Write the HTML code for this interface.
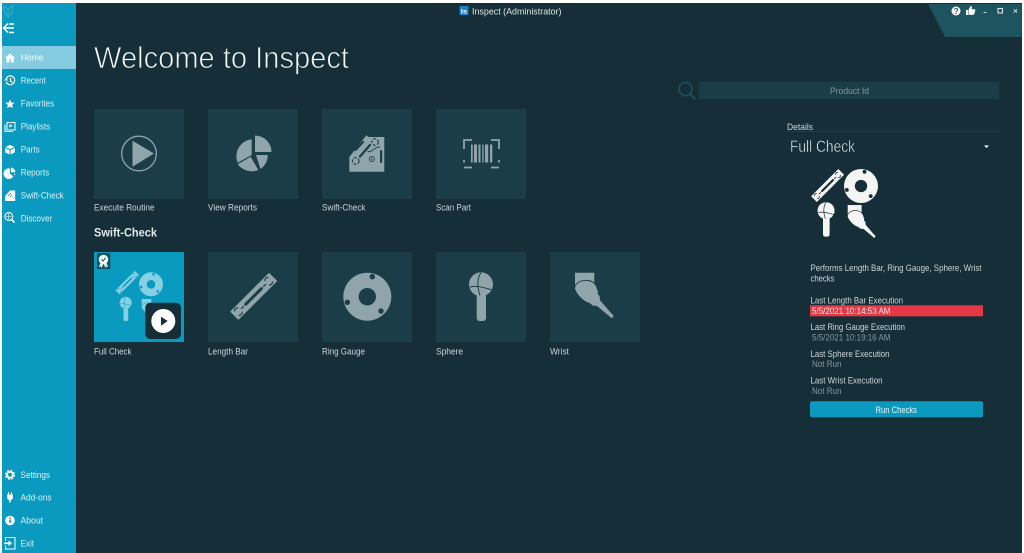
<!DOCTYPE html>
<html><head><meta charset="utf-8"><style>
html,body{margin:0;padding:0;background:#fff;width:1024px;height:553px;overflow:hidden}
svg{display:block}
text{font-family:"Liberation Sans",sans-serif;font-size:9.4px}
.n{fill:#d9f0f6}
.l{fill:#cdd5d8}
.v{fill:#84989e}
.thin{stroke:#152e37;stroke-width:.85}
.tile{fill:#1b3d47}
.g{fill:#8fa5ab}
.h{fill:var(--h)}
.w{fill:#fff}
</style></head><body>
<svg width="1024" height="553" viewBox="0 0 1024 553" xmlns="http://www.w3.org/2000/svg">
<defs>
<g id="bar"><g transform="rotate(-45 253.700 296.300)"><rect x="226.200" y="290.500" width="55" height="11.600" fill="currentColor"/><rect x="241" y="294.800" width="25" height="3" rx="1.500" class="h"/><path d="M236 296.300h4M267 296.300h4" style="stroke:var(--h)" stroke-width="1.200"/><path d="M229.500 293.500a3 3 0 0 1 5 0M229.500 299a3 3 0 0 0 5 0M272.500 293.500a3 3 0 0 1 5 0M272.500 299a3 3 0 0 0 5 0" fill="none" style="stroke:var(--h)" stroke-width="1.200"/></g></g>
<g id="ring"><path fill="currentColor" fill-rule="evenodd" d="M343.300 296.700a24 24 0 1 0 48 0a24 24 0 1 0-48 0zM358.600 296.700a8.700 8.700 0 1 1 17.400 0a8.700 8.700 0 1 1-17.400 0z"/><circle cx="372.300" cy="276.700" r="2.700" class="h"/><circle cx="347.300" cy="302.300" r="2.700" class="h"/><circle cx="381" cy="311" r="2.700" class="h"/></g>
<g id="sph"><rect x="476.700" y="292" width="9.300" height="29" rx="3" fill="currentColor"/><circle cx="481" cy="284.300" r="12" fill="currentColor"/><path d="M470 287c7-2 15 1 22.500 3M481 272.500c-4 6-4 14-1 23" fill="none" style="stroke:var(--h)" stroke-width="1"/></g>
<g id="wr"><path fill="currentColor" d="M575 272.700H594.300V286H575z"/><path fill="currentColor" style="stroke:var(--h)" stroke-width=".9" d="M574.500 288c1-6 8-8.500 14-7.500c5 1 8 4 9 9l1 2-.5 2 2 2.500.5 4 11.500 13.500c2 .8 2.300 3 1.200 4.200c-1.200 1.200-3 .8-3.800-.8l-12.500-10.500-4.500-.5-3-2.500c-7-2-13-9-15-15z"/></g>
</defs>

<rect x="2" y="3" width="1020" height="550" fill="#152e37"/>
<rect x="2" y="3" width="74" height="550" fill="#0a9abf"/>
<rect x="2" y="46" width="74" height="23" fill="#85cce0"/>
<polygon points="928,4 945,37 1022,37 1022,4" fill="#1d545f"/>

<g fill="none" stroke="#4fb4cf" stroke-width=".7"><path d="M3 6l5 3 5-4-1 8-4 4-3-4zM8 9v8"/></g>
<g fill="none" stroke="#fff" stroke-width="1.400"><path d="M8 23.500l-4.500 4.500 4.500 4.500M4 28h10M9 24h5M9 32.500h5"/></g>

<text lengthAdjust="spacingAndGlyphs" class="n" x="20.700" y="60.500" textLength="23" style="fill:#f2fafc">Home</text>
<text lengthAdjust="spacingAndGlyphs" class="n" x="20.700" y="83.500" textLength="25">Recent</text>
<text lengthAdjust="spacingAndGlyphs" class="n" x="20.700" y="106.500" textLength="33.500">Favorites</text>
<text lengthAdjust="spacingAndGlyphs" class="n" x="20.700" y="129.500" textLength="29.500">Playlists</text>
<text lengthAdjust="spacingAndGlyphs" class="n" x="20.700" y="152.500" textLength="19">Parts</text>
<text lengthAdjust="spacingAndGlyphs" class="n" x="20.700" y="175.500" textLength="28.500">Reports</text>
<text lengthAdjust="spacingAndGlyphs" class="n" x="20.700" y="198.500" textLength="43">Swift-Check</text>
<text lengthAdjust="spacingAndGlyphs" class="n" x="20.700" y="221.300" textLength="31.500">Discover</text>
<text lengthAdjust="spacingAndGlyphs" class="n" x="20.500" y="477.800" textLength="29.500">Settings</text>
<text lengthAdjust="spacingAndGlyphs" class="n" x="20.500" y="500.600" textLength="31">Add-ons</text>
<text lengthAdjust="spacingAndGlyphs" class="n" x="20.500" y="523.500" textLength="22.500">About</text>
<text lengthAdjust="spacingAndGlyphs" class="n" x="20.500" y="546.500" textLength="13.500">Exit</text>

<g class="w">
<path d="M10 53.500l-5 4.500h1.500v4.500h2.800v-3h1.600v3h2.800v-4.500h1.500z"/>
<path fill="none" stroke="#fff" stroke-width="1.200" d="M6.500 78a4.400 4.400 0 1 1-.3 4M10.500 78v3l2 1.300"/><path d="M4.500 80.500h3.500l-1.700-3z"/>
<path d="M10 99.500l1.300 3 3.300.3-2.500 2.200.8 3.200-2.900-1.700-2.900 1.700.8-3.200-2.500-2.200 3.300-.3z"/>
<path fill="none" stroke="#fff" stroke-width="1" d="M7 122.500h8v7.500H7zM5 124.500v7h8"/><path d="M9.500 124l3 1.800-3 1.800z"/>
<path d="M10 145l4.500 2-4.500 2-4.500-2zM5.200 148l4.300 2v4.500l-4.300-2zM14.800 148l-4.300 2v4.500l4.300-2z"/>
<path d="M10.800 167.500a5 5 0 0 1 4.700 4.700h-4.700zM9.800 168.500v5l3.500 3a5.300 5.300 0 1 1-3.500-8zM14 174l1.300-.8-.5 2.500z"/>
<path d="M5 196l5-5.500h5.200V201H5z"/><path d="M8 196l3-3M10 197l2-2" stroke="#0a9abf" stroke-width=".8"/>
<circle cx="8.800" cy="216.500" r="3.900" fill="none" stroke="#fff" stroke-width="1.100"/><path d="M6 216.500h5.500M8.800 213.500v6" stroke="#fff" stroke-width=".6"/><path d="M11.500 219.500l3 3" stroke="#fff" stroke-width="1.700"/>
<circle cx="10" cy="474.800" r="2.900" fill="none" stroke="#fff" stroke-width="1.800"/><circle cx="10" cy="474.800" r="4.400" fill="none" stroke="#fff" stroke-width="1.300" stroke-dasharray="2 1.500"/>
<path d="M8 492h.9v2.500H8zM11.100 492h.9v2.500h-.9zM7 494.500h6v2.500a3 3 0 0 1-2.300 3v2.500H9.300V500a3 3 0 0 1-2.300-3z"/>
<circle cx="10" cy="520.500" r="4.800"/><rect x="9.200" y="519.500" width="1.600" height="3.400" fill="#0a9abf"/><rect x="9.200" y="517.400" width="1.600" height="1.400" fill="#0a9abf"/>
<path fill="none" stroke="#fff" stroke-width="1" d="M5.500 541v-3.500h9.500v11.500H5.500v-3.500"/><path d="M4 542.500h4.500v-2l3.500 2.800-3.500 2.800v-2H4z"/>
</g>

<rect x="459.500" y="6" width="9" height="9" fill="#1c7fc4"/>
<text lengthAdjust="spacingAndGlyphs" x="460.800" y="13.300" textLength="6.400" style="font-size:6.500px;font-weight:bold" fill="#fff">Is</text>
<text lengthAdjust="spacingAndGlyphs" x="472" y="14.300" textLength="89.500" fill="#dfe6e8">Inspect (Administrator)</text>
<circle cx="956" cy="11" r="4.500" fill="#fff"/>
<text x="953.800" y="13.800" style="font-size:8px;font-weight:bold" fill="#1d545f">?</text>
<path d="M966 10h2v5h-2zM968.500 10l2-4c1 0 1.500.6 1.400 1.500l-.3 1.700h2.900c.7 0 1 .6.800 1.200l-1 3.500c-.2.600-.6 1-1.200 1h-4.600z" fill="#fff"/>
<rect x="983.500" y="12" width="3" height="1" fill="#c9d6da"/>
<rect x="998" y="8.500" width="4.500" height="4.500" fill="none" stroke="#dbe4e6" stroke-width="1.100"/>
<path d="M1013.700 9.300l3.400 3.400M1017.100 9.300l-3.400 3.400" stroke="#c9d6da" stroke-width="1"/>

<text lengthAdjust="spacingAndGlyphs" class="thin" x="94" y="68" textLength="255" style="font-size:31px" fill="#f4f7f8">Welcome to Inspect</text>

<circle cx="685.500" cy="89" r="6.500" fill="none" stroke="#1e4d5c" stroke-width="1.800"/>
<path d="M690.500 94l5 5.500" stroke="#1e4d5c" stroke-width="2"/>
<rect x="699.300" y="81.700" width="300" height="17.300" class="tile"/>
<text lengthAdjust="spacingAndGlyphs" class="v" x="830" y="94" textLength="39">Product Id</text>

<rect class="tile" x="94" y="109" width="90" height="90"/>
<rect class="tile" x="208" y="109" width="90" height="90"/>
<rect class="tile" x="322" y="109" width="90" height="90"/>
<rect class="tile" x="436" y="109" width="90" height="90"/>
<circle cx="139" cy="153.500" r="17.300" fill="none" stroke="#8fa5ab" stroke-width="1.300"/>
<polygon class="g" points="132.500,140.700 154,153.500 132.500,166.700"/>
<g class="g">
<path d="M255 135.500A16.500 16.500 0 0 1 271.500 152H255z"/>
<path d="M256 155h11.800A17 17 0 0 1 260.500 169z"/>
<path d="M250.700 156.700L258.300 170A17.500 17.500 0 0 1 237.700 164.300z"/>
<path d="M251.700 139.300V155L237.700 162.700A17 17 0 0 1 251.700 139.300z"/>
</g>
<g>
<path class="g" d="M349.300 157L365 137l1.500-1.800 2 1.800H384.300V171.700H349.300z"/>
<g fill="none" stroke="#1b3d47">
<path stroke-width="2.200" stroke-linecap="round" d="M355.500 150l7.500-8M360 156.500l10-11.500"/>
<circle cx="375" cy="142" r="3.300" stroke-width="1.100" stroke-dasharray="3 1.500"/>
<circle cx="355.700" cy="161" r="3.300" stroke-width="1.100" stroke-dasharray="3 1.500"/>
<circle cx="371.700" cy="159" r="2.500" stroke-width=".9"/>
<path stroke-width=".9" d="M367.500 151c2.500 2 4-.5 6-1.500s3-3 6.800-2.500"/>
</g>
<rect x="380" y="150" width="2.200" height="13" rx="1.100" fill="#1b3d47"/>
<circle cx="371.700" cy="159" r=".8" fill="#1b3d47"/>
</g>
<g fill="none" stroke="#8fa5ab" stroke-width="1.800">
<path d="M464 149v-9h8M491 140h8v9M464 160v2.500M499 160v2.500M464 167.500h8M491 167.500h8"/>
</g>
<g class="g">
<rect x="471" y="144.500" width="1.700" height="18"/><rect x="474" y="144.500" width="3" height="18"/><rect x="478.500" y="144.500" width="2" height="18"/><rect x="482.300" y="144.500" width="1.300" height="18"/><rect x="485" y="144.500" width="3.200" height="18"/><rect x="490" y="144.500" width="2.300" height="18"/>
</g>
<text lengthAdjust="spacingAndGlyphs" class="l" x="94" y="210.300" textLength="60.500">Execute Routine</text>
<text lengthAdjust="spacingAndGlyphs" class="l" x="208" y="210.300" textLength="49">View Reports</text>
<text lengthAdjust="spacingAndGlyphs" class="l" x="322" y="210.300" textLength="43.500">Swift-Check</text>
<text lengthAdjust="spacingAndGlyphs" class="l" x="436" y="210.300" textLength="35">Scan Part</text>

<text lengthAdjust="spacingAndGlyphs" x="94" y="236.300" textLength="63" style="font-size:11.500px;font-weight:bold" fill="#e4e9eb">Swift-Check</text>

<rect x="94" y="252" width="90" height="90" fill="#0a9abf"/>
<rect class="tile" x="208" y="252" width="90" height="90"/>
<rect class="tile" x="322" y="252" width="90" height="90"/>
<rect class="tile" x="436" y="252" width="90" height="90"/>
<rect class="tile" x="550" y="252" width="90" height="90"/>

<g color="#8fa5ab" style="--h:#1b3d47">
<use href="#bar"/><use href="#ring"/><use href="#sph"/><use href="#wr"/>
</g>

<g color="#85d0e3" style="--h:#0a9abf">
<use href="#bar" transform="translate(.35 134.500) scale(.5)"/>
<use href="#ring" transform="translate(-32.650 135.950) scale(.5)"/>
<use href="#sph" transform="translate(-114.800 160.550) scale(.5)"/>
<use href="#wr" transform="translate(-145.800 162.650) scale(.5)"/>
</g>
<rect x="97" y="253" width="13.300" height="16" fill="#15505f"/>
<path fill="#d9edf2" d="M100.500 263l-1.800 4 2-.5 1 1.500 1.500-4zM106.500 263l1.800 4-2-.5-1 1.500-1.500-4z"/>
<circle cx="103.500" cy="259.500" r="4.800" fill="#f1f8fa"/>
<path d="M101.500 259.500l1.500 1.500 2.500-3" fill="none" stroke="#15505f" stroke-width="1"/>
<rect x="145.300" y="302.700" width="35.700" height="36.300" rx="5" fill="#152e37"/>
<circle cx="163.300" cy="321" r="12" fill="#fff"/>
<polygon points="161,316.700 167.700,321 161,325.700" fill="#152e37"/>

<text lengthAdjust="spacingAndGlyphs" class="l" x="94" y="354.300" textLength="37.500">Full Check</text>
<text lengthAdjust="spacingAndGlyphs" class="l" x="208" y="354.300" textLength="40">Length Bar</text>
<text lengthAdjust="spacingAndGlyphs" class="l" x="322" y="354.300" textLength="43">Ring Gauge</text>
<text lengthAdjust="spacingAndGlyphs" class="l" x="436" y="354.300" textLength="27">Sphere</text>
<text lengthAdjust="spacingAndGlyphs" class="l" x="550" y="354.300" textLength="19">Wrist</text>

<text lengthAdjust="spacingAndGlyphs" class="l" x="787" y="129.800" textLength="26">Details</text>
<rect x="787" y="131" width="213" height="1" fill="#1b3d47"/>
<text lengthAdjust="spacingAndGlyphs" class="thin" x="790" y="152" textLength="65" style="font-size:16.500px;stroke-width:.45" fill="#e6ebed">Full Check</text>
<polygon points="984,145.500 989,145.500 986.500,148" fill="#fff"/>

<g color="#f5f5f5" style="--h:#152e37">
<use href="#bar" transform="translate(650 -21.900) scale(.7)"/>
<use href="#ring" transform="translate(600.960 -24.060) scale(.708)"/>
<use href="#sph" transform="translate(485.500 9.400) scale(.708)"/>
<use href="#wr" transform="translate(433.700 8.700) scale(.72)"/>
</g>

<text lengthAdjust="spacingAndGlyphs" class="l" x="810.500" y="271" textLength="171">Performs Length Bar, Ring Gauge, Sphere, Wrist</text>
<text lengthAdjust="spacingAndGlyphs" class="l" x="810.500" y="281.500" textLength="24">checks</text>

<text lengthAdjust="spacingAndGlyphs" class="l" x="810.500" y="303.500" textLength="92.500">Last Length Bar Execution</text>
<rect x="810" y="305.300" width="173" height="11" fill="#e63946"/>
<text lengthAdjust="spacingAndGlyphs" x="812" y="314" textLength="78.500" fill="#f8e4e4">5/5/2021 10:14:53 AM</text>
<text lengthAdjust="spacingAndGlyphs" class="l" x="810.500" y="330" textLength="94.500">Last Ring Gauge Execution</text>
<text lengthAdjust="spacingAndGlyphs" class="v" x="812" y="340.500" textLength="78.500">5/5/2021 10:19:16 AM</text>
<text lengthAdjust="spacingAndGlyphs" class="l" x="810.500" y="357" textLength="79">Last Sphere Execution</text>
<text lengthAdjust="spacingAndGlyphs" class="v" x="812" y="367" textLength="29.500">Not Run</text>
<text lengthAdjust="spacingAndGlyphs" class="l" x="810.500" y="383.500" textLength="72">Last Wrist Execution</text>
<text lengthAdjust="spacingAndGlyphs" class="v" x="812" y="394" textLength="29.500">Not Run</text>
<rect x="810" y="401.300" width="173" height="16" rx="2" fill="#0a9abf"/>
<text lengthAdjust="spacingAndGlyphs" x="875.500" y="413" textLength="41.500" fill="#e6f5f9">Run Checks</text>
</svg>
</body></html>
